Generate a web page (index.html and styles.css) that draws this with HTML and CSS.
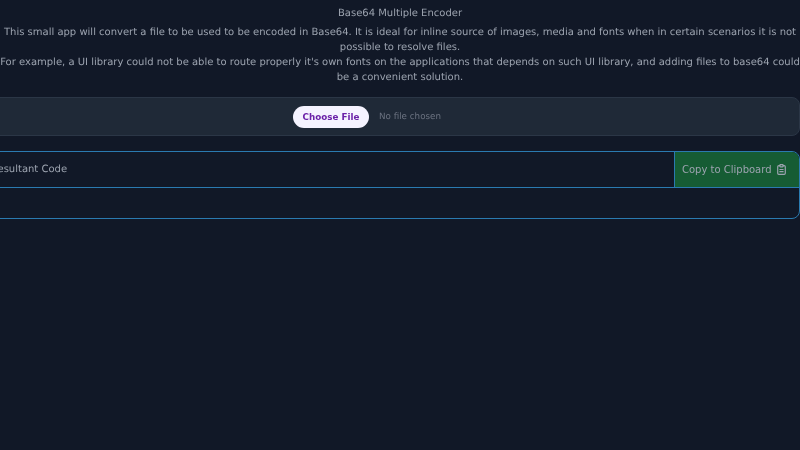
FILE: index.html
```html
<!DOCTYPE html>
<html lang="en">
<head>
<meta charset="utf-8">
<title>Base64 Multiple Encoder</title>
<link rel="stylesheet" href="styles.css">
</head>
<body>
<main class="app">
  <header class="intro">
    <h1 class="title">Base64 Multiple Encoder</h1>
    <p class="copy">This small app will convert a file to be used to be encoded in Base64. It is ideal for inline source of images, media and fonts when in certain scenarios it is not possible to resolve files.<br>For example, a UI library could not be able to route properly it's own fonts on the applications that depends on such UI library, and adding files to base64 could be a convenient solution.</p>
  </header>
  <section class="upload">
    <div class="picker">
      <button class="choose" type="button">Choose File</button>
      <span class="chosen">No file chosen</span>
    </div>
  </section>
  <section class="result">
    <div class="result-head">
      <span class="result-label">Resultant Code</span>
      <button class="clip" type="button">Copy to Clipboard
        <svg class="clip-icon" viewBox="0 0 24 24" fill="none" stroke="currentColor" stroke-width="2.2" stroke-linecap="round" stroke-linejoin="round" aria-hidden="true"><path d="M9 5H7a2 2 0 0 0-2 2v12a2 2 0 0 0 2 2h10a2 2 0 0 0 2-2V7a2 2 0 0 0-2-2h-2"/><rect x="9" y="3" width="6" height="4" rx="1"/><path d="M9 12h6M9 16h6"/></svg>
      </button>
    </div>
    <div class="result-body"></div>
  </section>
</main>
</body>
</html>
```
FILE: styles.css
```css
* { box-sizing: border-box; }
html, body { margin: 0; height: 100%; overflow: hidden; background: #111827; }
body { font-family: "DejaVu Sans", sans-serif; font-size: 10px; line-height: 15px; color: #9ca3af; text-rendering: geometricPrecision; }
.app { display: flex; flex-direction: column; width: 800px; filter: blur(0.25px); }
.intro { padding-top: 6px; text-align: center; }
.title { margin: 0 0 4px; font-size: 10px; line-height: 15px; font-weight: 400; }
.copy { margin: 0; }
.upload { display: flex; justify-content: center; align-items: center; height: 39px; margin: 12px 0 15px -24px; background: #1f2937; border: 1px solid #2b3646; border-radius: 8px; }
.picker { display: flex; align-items: center; width: 190px; gap: 10px; }
.choose { width: 76px; height: 22px; padding: 1px 0 0; border: 0; border-radius: 11px; background: #f5f3ff; color: #6b21a8; font: 700 8.75px/15px "DejaVu Sans", sans-serif; }
.chosen { padding-top: 2px; font-size: 8.75px; color: #6b7280; }
.result { margin-left: -24px; border: 1px solid #2a7ab0; border-radius: 8px; overflow: hidden; }
.result-head { display: flex; align-items: stretch; height: 36px; border-bottom: 1px solid #2a7ab0; }
.result-label { flex: 1; padding-left: 14px; align-self: center; }
.clip { display: flex; align-items: center; gap: 3.5px; width: 125px; padding: 0 0 0 7px; border: 0; border-left: 1px solid #2a7ab0; background: #165c34; color: #9ca3af; font: 400 10px/15px "DejaVu Sans", sans-serif; }
.clip-icon { width: 13px; height: 13px; }
.result-body { height: 30px; }
```
